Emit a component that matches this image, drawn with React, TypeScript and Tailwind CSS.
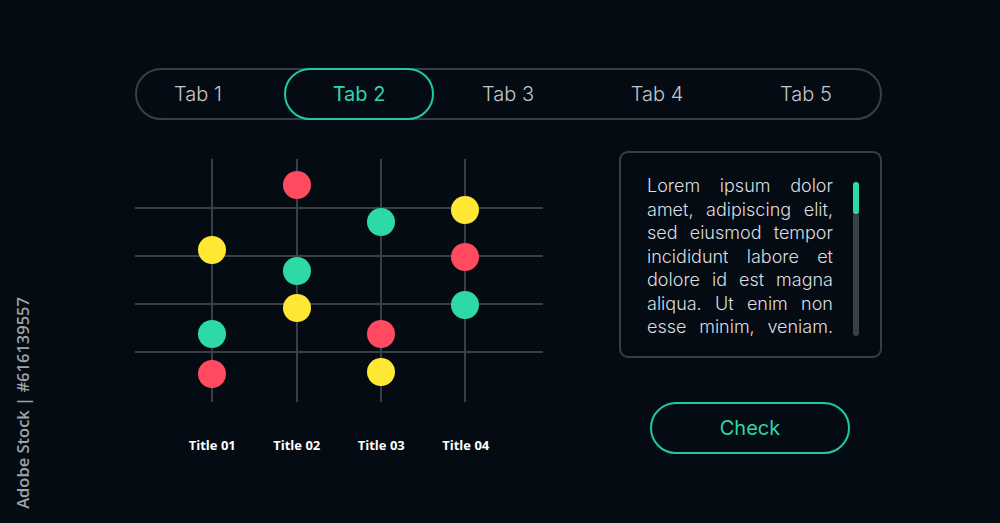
import React from "react";

const GRID = "#394045";

const tabs = [
  { label: "Tab 1", w: "w-[147px] justify-start pl-[37px]", active: false },
  { label: "Tab 2", w: "w-[150px] justify-center", active: true },
  { label: "Tab 3", w: "w-[148px] justify-center", active: false },
  { label: "Tab 4", w: "w-[150px] justify-center", active: false },
  { label: "Tab 5", w: "flex-1 justify-center", active: false },
];

const RED = "#ff4a5f";
const YELLOW = "#ffe834";
const TEAL = "#2ddaa5";

const columns = [
  { x: 77, dots: [{ y: 91, c: YELLOW }, { y: 175, c: TEAL }, { y: 215, c: RED }] },
  { x: 162, dots: [{ y: 26, c: RED }, { y: 112, c: TEAL }, { y: 149, c: YELLOW }] },
  { x: 246, dots: [{ y: 63, c: TEAL }, { y: 175, c: RED }, { y: 213, c: YELLOW }] },
  { x: 330, dots: [{ y: 51, c: YELLOW }, { y: 98, c: RED }, { y: 146, c: TEAL }] },
];

const rows = [49, 97, 145, 193];

const lines = [
  "Lorem ipsum dolor",
  "amet, adipiscing elit,",
  "sed eiusmod tempor",
  "incididunt labore et",
  "dolore id est magna",
  "aliqua. Ut enim non",
  "esse minim, veniam.",
];

function DotChart() {
  return (
    <svg width="408" height="243" viewBox="0 0 408 243">
      {rows.map((y) => (
        <line key={y} x1="0" x2="408" y1={y} y2={y} stroke={GRID} strokeWidth="2" />
      ))}
      {columns.map((col) => (
        <line key={col.x} x1={col.x} x2={col.x} y1="0" y2="243" stroke={GRID} strokeWidth="2" />
      ))}
      {columns.map((col) =>
        col.dots.map((d, i) => <circle key={col.x + "-" + i} cx={col.x} cy={d.y} r="14" fill={d.c} />)
      )}
    </svg>
  );
}

export default function App() {
  return (
    <div
      className="relative w-[1000px] h-[523px] overflow-hidden bg-[#050b12] pt-[68px] pl-[135px]"
      style={{ fontFamily: "Inter, 'Open Sans', sans-serif" }}
    >
      {/* Tabs */}
      <div className="flex items-center w-[747px] h-[52px] rounded-full border-2 border-[#394045]">
        {tabs.map((t) => (
          <div
            key={t.label}
            className={
              "flex items-center h-[52px] shrink-0 text-[20px] " +
              t.w +
              (t.active
                ? " rounded-full border-[2.5px] border-[#1fc9a8] text-[#2dd6ad] font-normal"
                : " text-[#c3c7ca] font-light")
            }
          >
            {t.label}
          </div>
        ))}
      </div>

      <div className="flex mt-[31px]">
        {/* Chart */}
        <div className="w-[408px] pt-[8px]">
          <DotChart />
          <div
            className="flex pl-[35px] mt-[34px] text-[13px] font-bold text-white"
            style={{ fontFamily: "'Open Sans', sans-serif" }}
          >
            {["Title 01", "Title 02", "Title 03", "Title 04"].map((t) => (
              <div key={t} className="w-[84.5px] text-center">
                {t}
              </div>
            ))}
          </div>
        </div>

        {/* Right panel */}
        <div className="ml-[76px] w-[263px]">
          <div className="flex h-[207px] rounded-[9px] border-2 border-[#394045] pl-[26px] pr-[21px] pt-[21px]">
            <div className="w-[190px] text-[18px] leading-[23.5px] font-light text-[#dcdfe0]">
              {lines.map((l) => (
                <div key={l} className="flex justify-between">
                  {l.split(" ").map((w, i) => (
                    <span key={i}>{w}</span>
                  ))}
                </div>
              ))}
            </div>
            <div className="ml-[20px] mt-[8px] w-[6px] h-[154px] rounded-full bg-[#394045]">
              <div className="w-[6px] h-[32px] rounded-full bg-[#2ddaa5]" />
            </div>
          </div>
          <button className="mt-[44px] ml-[31px] flex items-center justify-center w-[200px] h-[52px] rounded-full border-[2.5px] border-[#1fc9a8] text-[20px] text-[#2dd6ad]">
            Check
          </button>
        </div>
      </div>

      {/* Side watermark label */}
      <div
        className="absolute left-[11px] bottom-[14px] rotate-180 [writing-mode:vertical-rl] text-[16.5px] font-semibold text-[#9ea3a7]"
        style={{ fontFamily: "'Open Sans', sans-serif" }}
      >
        Adobe Stock | #616139557
      </div>
    </div>
  );
}
